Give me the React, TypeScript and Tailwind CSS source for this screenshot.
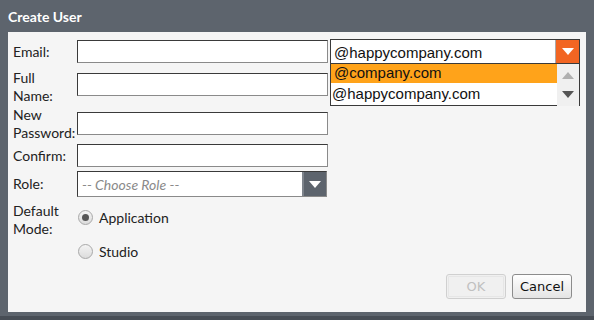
const LABEL = "w-[64px] shrink-0 text-[14px] leading-[18px] text-[#222]";
const INPUT =
  "h-[23px] w-[251px] border border-t-[#3a3a3a] border-l-[#3a3a3a] border-r-[#8a8a8a] border-b-[#8a8a8a] bg-white";

function Caret({ className }: { className: string }) {
  return (
    <svg width="12" height="7" viewBox="0 0 12 7" className={className}>
      <path d="M0 0h12L6 7z" fill="currentColor" />
    </svg>
  );
}

function Radio({ checked, label }: { checked?: boolean; label: string }) {
  return (
    <div className="flex items-center gap-[6px]">
      <span className="grid h-[15px] w-[15px] place-items-center rounded-full border border-[#a8a8a8] bg-gradient-to-b from-[#f4f4f4] to-[#dcdcdc]">
        {checked && <span className="h-[7px] w-[7px] rounded-full bg-[#555]" />}
      </span>
      <span className="text-[14px] text-[#222]">{label}</span>
    </div>
  );
}

export default function App() {
  return (
    <div
      className="flex h-[320px] w-[594px] flex-col bg-[#5d646d]"
      style={{ fontFamily: 'Lato, "Open Sans", sans-serif' }}
    >
      {/* title bar */}
      <div className="flex h-[32px] shrink-0 items-center pl-[8px]">
        <span className="text-[14px] font-bold text-white">Create User</span>
      </div>

      <div className="mx-[8px] flex flex-1 flex-col bg-[#f5f5f5] pl-[5px] pt-[8px]">
        <div className="flex">
          <div className="flex flex-col">
            {/* Email */}
            <div className="flex h-[23px] items-center">
              <div className={LABEL}>Email:</div>
              <div className={INPUT} />
            </div>
            {/* Full name */}
            <div className="mt-[6px] flex items-start">
              <div className={LABEL}>
                Full
                <br />
                Name:
              </div>
              <div className={`${INPUT} mt-[4px]`} />
            </div>
            {/* New password */}
            <div className="mt-[1px] flex items-start">
              <div className={LABEL}>
                New
                <br />
                Password:
              </div>
              <div className={`${INPUT} mt-[6px] h-[22px]`} />
            </div>
            {/* Confirm */}
            <div className="mt-[2px] flex h-[23px] items-center">
              <div className={LABEL}>Confirm:</div>
              <div className={INPUT} />
            </div>
            {/* Role */}
            <div className="mt-[4px] flex h-[26px] items-center">
              <div className={LABEL}>Role:</div>
              <div className="flex h-[26px] w-[250px] border border-t-[#3a3a3a] border-l-[#3a3a3a] border-r-[#8a8a8a] border-b-[#8a8a8a] bg-white">
                <div className="flex flex-1 items-center pl-[4px] text-[14px] italic text-[#8a8a8a]">
                  -- Choose Role --
                </div>
                <div className="grid w-[24px] place-items-center border-l-2 border-[#7d838b] bg-[#5d646d]">
                  <Caret className="text-white" />
                </div>
              </div>
            </div>
            {/* Default mode */}
            <div className="mt-[5px] flex items-start">
              <div className={LABEL}>
                Default
                <br />
                Mode:
              </div>
              <div className="mt-[5px] flex flex-col gap-[13px] pl-[1px]">
                <Radio checked label="Application" />
                <Radio label="Studio" />
              </div>
            </div>
          </div>

          {/* domain combobox */}
          <div
            className="ml-[2px] mt-[-1px] flex h-[67px] w-[250px] flex-col border border-[#3a3a3a] bg-white"
            style={{ fontFamily: '"Liberation Sans", Arial, sans-serif' }}
          >
            <div className="flex h-[23px] shrink-0">
              <div className="flex flex-1 items-end pb-[1px] pl-[3px] text-[15px] leading-[18px] text-[#111]">
                @happycompany.com
              </div>
              <div className="grid w-[24px] place-items-center border-l border-[#aaa] bg-[#f26522]">
                <Caret className="text-white" />
              </div>
            </div>
            <div className="flex flex-1 border-t border-[#3a3a3a]">
              <div className="flex flex-1 flex-col">
                <div className="flex h-[19px] items-center bg-[#ffa31a] pl-[3px] text-[15px] text-[#111]">
                  @company.com
                </div>
                <div className="flex flex-1 items-center pl-[1px] text-[15px] text-[#111]">
                  @happycompany.com
                </div>
              </div>
              <div className="flex w-[22px] flex-col items-center justify-between bg-[#f0f0f0] py-[8px]">
                <Caret className="rotate-180 text-[#b0b0b0]" />
                <Caret className="text-[#555]" />
              </div>
            </div>
          </div>
        </div>

        {/* buttons */}
        <div
          className="mr-[14px] mt-auto mb-[13px] flex justify-end gap-[6px]"
          style={{ fontFamily: "Tahoma, \"DejaVu Sans\", sans-serif" }}
        >
          <button className="h-[25px] w-[60px] rounded-[3px] border border-[#d0d0d0] bg-[#f0f0f0] text-[13px] text-[#c0c0c0] outline outline-1 outline-offset-[-3px] outline-[#e6e6e6]">
            OK
          </button>
          <button className="h-[25px] w-[60px] rounded-[3px] border border-[#8c8c8c] bg-gradient-to-b from-[#ffffff] to-[#e4e4e4] text-[13px] text-[#111]">
            Cancel
          </button>
        </div>
      </div>
      <div className="h-[8px] shrink-0 border-t-[4px] border-[#5d646d] bg-[#474d55]" />
    </div>
  );
}
